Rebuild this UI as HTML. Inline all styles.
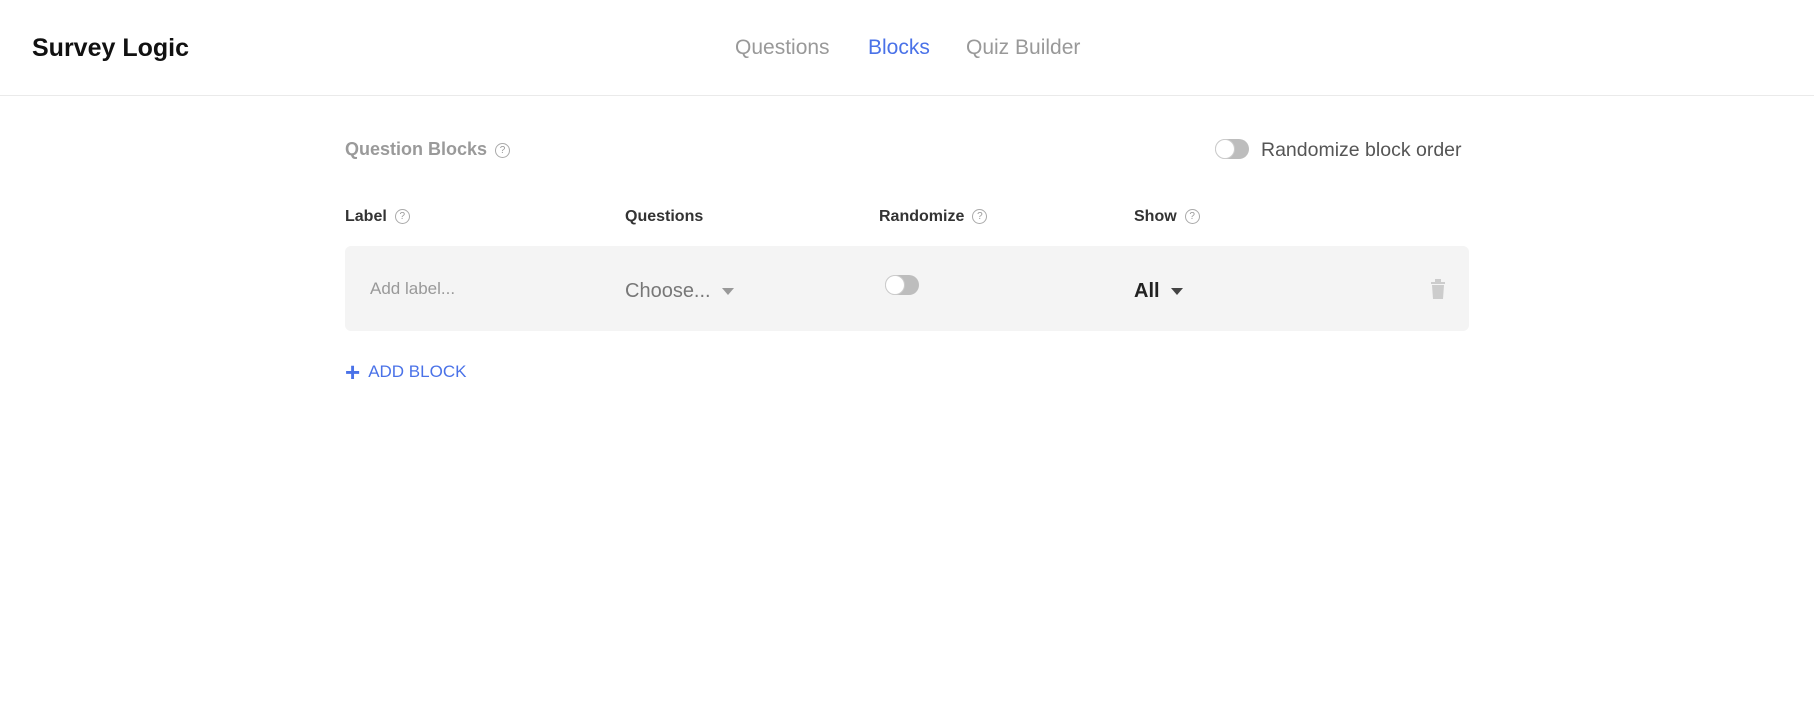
<!DOCTYPE html>
<html><head><meta charset="utf-8"><style>
body{margin:0;width:1814px;height:719px;background:#fff;font-family:"Liberation Sans",sans-serif;position:relative;overflow:hidden}
.a{position:absolute;white-space:nowrap}
.q{display:inline-block;width:13px;height:13px;border:1px solid #aaa;border-radius:50%;font-size:10px;line-height:13px;text-align:center;color:#999;font-weight:normal;vertical-align:middle;margin-left:8px}
.tg{position:absolute;width:34px;height:20px;border-radius:10px;background:#bdbdbd}
.tg:after{content:"";position:absolute;left:0;top:0;width:18px;height:18px;border-radius:50%;background:#fff;border:1px solid #ccc}
.car{display:inline-block;border-left:6px solid transparent;border-right:6px solid transparent;border-top:7px solid #999;vertical-align:middle}
</style></head><body>
<div class="a" style="left:32px;top:34px;font-size:25px;font-weight:bold;color:#111">Survey Logic</div>
<div class="a" style="left:735px;top:36px;font-size:21px;color:#999">Questions</div>
<div class="a" style="left:868px;top:36px;font-size:21px;color:#4a72e8">Blocks</div>
<div class="a" style="left:966px;top:36px;font-size:21px;color:#999">Quiz Builder</div>
<div class="a" style="left:0;top:95px;width:1814px;height:1px;background:#eaeaea"></div>
<div class="a" style="left:345px;top:139px;font-size:18px;font-weight:bold;color:#9a9a9a">Question Blocks<span class="q">?</span></div>
<div class="tg" style="left:1215px;top:139px"></div>
<div class="a" style="left:1261px;top:139px;font-size:19.5px;color:#555">Randomize block order</div>
<div class="a" style="left:345px;top:208px;font-size:16px;font-weight:bold;color:#333">Label<span class="q">?</span></div>
<div class="a" style="left:625px;top:208px;font-size:16px;font-weight:bold;color:#333">Questions</div>
<div class="a" style="left:879px;top:208px;font-size:16px;font-weight:bold;color:#333">Randomize<span class="q">?</span></div>
<div class="a" style="left:1134px;top:208px;font-size:16px;font-weight:bold;color:#333">Show<span class="q">?</span></div>
<div class="a" style="left:345px;top:246px;width:1124px;height:85px;background:#f4f4f4;border-radius:6px"></div>
<div class="a" style="left:370px;top:279px;font-size:17px;color:#999">Add label...</div>
<div class="a" style="left:625px;top:280px;font-size:20px;color:#777">Choose...</div>
<div class="a" style="left:722px;top:283px"><span class="car"></span></div>
<div class="tg" style="left:885px;top:275px"></div>
<div class="a" style="left:1134px;top:280px;font-size:20px;font-weight:bold;color:#222">All</div>
<div class="a" style="left:1171px;top:283px"><span class="car" style="border-top-color:#444"></span></div>
<svg class="a" style="left:1430px;top:279px" width="16" height="20" viewBox="0 0 16 20"><rect x="1" y="3" width="14" height="2" fill="#ccc"/><rect x="5" y="0" width="6" height="3" fill="#ccc"/><path d="M2 6h12l-1 14H3z" fill="#ccc"/></svg>
<div class="a" style="left:345px;top:357px;font-size:17px;color:#4a72e8"><span style="font-size:26px;font-weight:bold;vertical-align:-4px">+</span><span style="margin-left:8px">ADD BLOCK</span></div>
</body></html>
